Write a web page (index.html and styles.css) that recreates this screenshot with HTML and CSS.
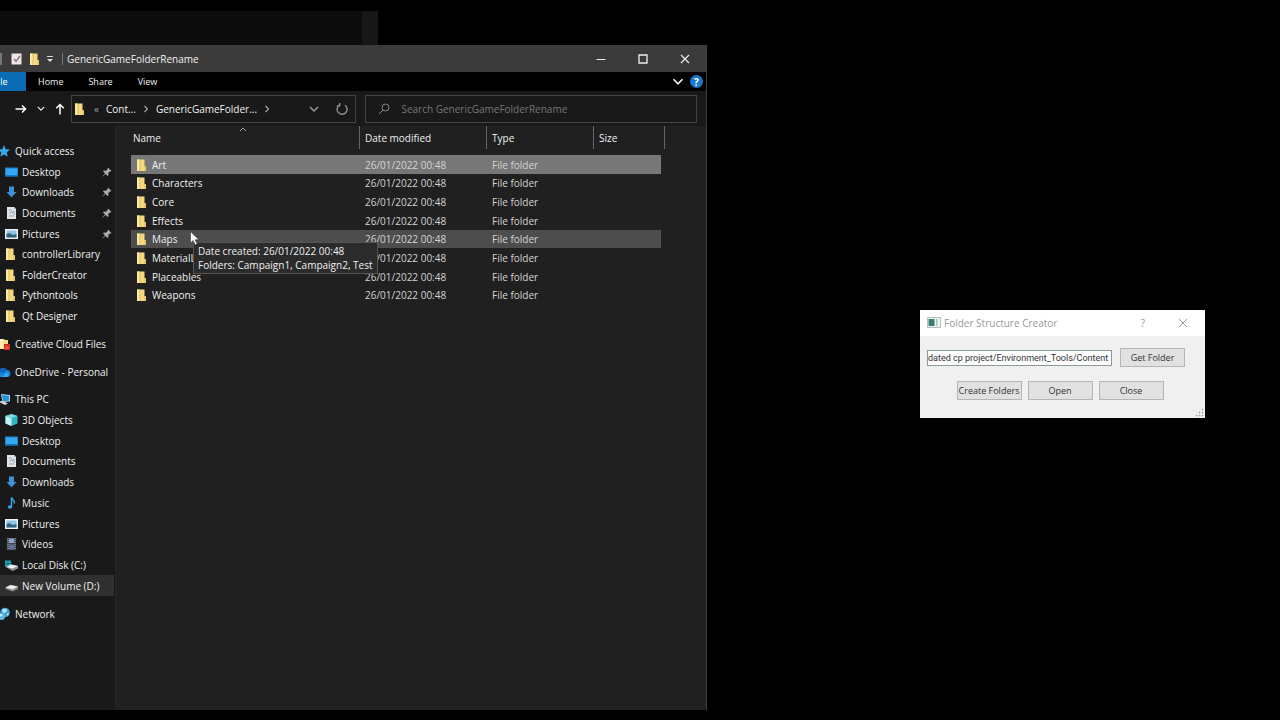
FILE: index.html
```html
<!DOCTYPE html>
<html lang="en">
<head>
<meta charset="utf-8">
<title>GenericGameFolderRename</title>
<link rel="stylesheet" href="styles.css">
</head>
<body>
<svg class="sprite" aria-hidden="true">
  <symbol id="folder" viewBox="0 0 14 14"><path d="M1 1.500h7.500V8l1.500.5V13H1z" fill="#f3d982"/><path d="M1 1.500h2.500V13H1z" fill="#fbe9a4"/><path d="M3.500 2h1v10.500h-1z" fill="#e0bf62"/><path d="M8 8.500h2V13H8z" fill="#e6c96e"/></symbol>
  <symbol id="desktop" viewBox="0 0 14 14"><path d="M0 2.500h13v9H0z" fill="#1583cf"/><path d="M1 3.500h11v6.500H1z" fill="#35a7ee"/><path d="M0 10.500h13v1H0z" fill="#0f6cb1"/></symbol>
  <symbol id="download" viewBox="0 0 14 14"><path d="M4 1.500h5V7h2.500l-5 5.500L1.500 7H4z" fill="#3c8fd9"/></symbol>
  <symbol id="document" viewBox="0 0 14 14"><path d="M2 1h7l2 2v10H2z" fill="#dfe4e8"/><path d="M9 1v2h2z" fill="#9ba8b3"/><path d="M4 4h2l1 3 2-2v4M4 7h2M4 10h5" fill="none" stroke="#7e95a8" stroke-width=".8"/></symbol>
  <symbol id="picture" viewBox="0 0 14 14"><path d="M0 2h13v10H0z" fill="#eef2f5"/><path d="M1.500 3.500h10v7h-10z" fill="#8ec5e6"/><path d="m1.500 7 3-1 3 2 4-1v3.500h-10z" fill="#35627c"/></symbol>
  <symbol id="pin" viewBox="0 0 10 10"><path d="m6 .5 3.500 3.500-1 .5-.7 0-1.500 1.600.2 2.100-.8.800L3.500 7 .7 9.600.4 9.300 3 6.500 1 4.300l.8-.8 2.100.2 1.600-1.500z" fill="#a8acb0"/></symbol>
  <symbol id="chev" viewBox="0 0 6 8"><path d="m1.500 1 3 3-3 3" fill="none" stroke="currentColor" stroke-width="1.100"/></symbol>
  <symbol id="down" viewBox="0 0 10 8"><path d="m1 2 4 4 4-4" fill="none" stroke="currentColor" stroke-width="1.500"/></symbol>
</svg>

<div class="back-window"></div>

<main class="explorer">
  <header class="titlebar">
    <span class="edge"></span>
    <svg class="tick" viewBox="0 0 12 14"><path d="M.5 1.500h10v11H.5z" fill="#eee6e6"/><path d="m3 7 2 2.500L9 4" fill="none" stroke="#8a6e74" stroke-width="1.300"/></svg>
    <svg class="icon"><use href="#folder"/></svg>
    <svg class="quick" viewBox="0 0 8 8"><path d="M1 1.500h6" stroke="#ddd"/><path d="M1 4h6L4 7z" fill="#ddd"/></svg>
    <span class="divider"></span>
    <h1>GenericGameFolderRename</h1>
    <div class="controls">
      <button aria-label="Minimise"><svg viewBox="0 0 10 10"><path d="M.5 5.500h9" stroke="#eee"/></svg></button>
      <button aria-label="Maximise"><svg viewBox="0 0 10 10"><path d="M1 1h8v8H1z" fill="none" stroke="#eee" stroke-width="1.300"/></svg></button>
      <button aria-label="Close window"><svg viewBox="0 0 10 10"><path d="m1 1 8 8M9 1 1 9" stroke="#eee" stroke-width="1.200"/></svg></button>
    </div>
  </header>

  <div class="ribbon">
    <button class="file">le</button>
    <button>Home</button>
    <button>Share</button>
    <button>View</button>
    <button class="expand" aria-label="Expand the ribbon"><svg viewBox="0 0 10 8"><use href="#down"/></svg></button>
    <button class="help" aria-label="Help">?</button>
  </div>

  <div class="toolbar">
    <div class="arrows">
      <button aria-label="Forward"><svg class="fwd" viewBox="0 0 12 10"><path d="M.5 5h10M7 1.500 10.500 5 7 8.500" fill="none" stroke="#fff" stroke-width="1.500"/></svg></button>
      <button aria-label="Recent locations"><svg class="recent"><use href="#down"/></svg></button>
      <button aria-label="Up"><svg class="up" viewBox="0 0 10 12"><path d="M5 11.500V1.500M1.200 5.300 5 1.500l3.800 3.800" fill="none" stroke="#fff" stroke-width="1.500"/></svg></button>
    </div>
    <div class="address">
      <svg class="icon"><use href="#folder"/></svg>
      <span class="more">«</span>
      <a href="#content">Cont...</a>
      <svg class="step"><use href="#chev"/></svg>
      <a href="#game">GenericGameFolder...</a>
      <svg class="step"><use href="#chev"/></svg>
      <button class="history" aria-label="Previous locations"><svg class="small"><use href="#down"/></svg></button>
      <button aria-label="Refresh"><svg class="refresh" viewBox="0 0 12 12"><path d="M3.500 2A5 5 0 1 0 9 2.200M3.700 0v2.800H.9" fill="none" stroke="#999" stroke-width="1.300"/></svg></button>
    </div>
    <label class="search">
      <svg viewBox="0 0 12 12"><circle cx="7.500" cy="4.500" r="3.500" fill="none" stroke="#888"/><path d="M5 7 1 11" stroke="#888"/></svg>
      <input type="search" aria-label="Search" placeholder="Search GenericGameFolderRename">
    </label>
  </div>

  <div class="panes">
    <nav class="tree">
      <ul class="quick-access">
        <li class="root"><a href="#"><svg class="icon" viewBox="0 0 14 14"><path d="m7 1 1.700 4.200 4.300.3-3.300 2.900 1 4.300L7 10.400l-3.700 2.300 1-4.300L1 5.500l4.300-.3z" fill="#38a9ea"/></svg>Quick access</a></li>
        <li><a href="#"><svg class="icon"><use href="#desktop"/></svg>Desktop<svg class="pin"><use href="#pin"/></svg></a></li>
        <li><a href="#"><svg class="icon"><use href="#download"/></svg>Downloads<svg class="pin"><use href="#pin"/></svg></a></li>
        <li><a href="#"><svg class="icon"><use href="#document"/></svg>Documents<svg class="pin"><use href="#pin"/></svg></a></li>
        <li><a href="#"><svg class="icon"><use href="#picture"/></svg>Pictures<svg class="pin"><use href="#pin"/></svg></a></li>
        <li><a href="#"><svg class="icon"><use href="#folder"/></svg>controllerLibrary</a></li>
        <li><a href="#"><svg class="icon"><use href="#folder"/></svg>FolderCreator</a></li>
        <li><a href="#"><svg class="icon"><use href="#folder"/></svg>Pythontools</a></li>
        <li><a href="#"><svg class="icon"><use href="#folder"/></svg>Qt Designer</a></li>
      </ul>
      <ul>
        <li class="root"><a href="#"><svg class="icon" viewBox="0 0 14 14"><path d="M2 2h5l1 1h3v9H2z" fill="#f6d98a"/><path d="M2 2h4v9H2z" fill="#ffedb8"/><path d="M7 7h6v6H7z" fill="#d22f1e"/><path d="M8.500 11c0-2 2-2 3 0z" fill="none" stroke="#ff8b70" stroke-width=".8"/></svg>Creative Cloud Files</a></li>
      </ul>
      <ul>
        <li class="root"><a href="#"><svg class="icon" viewBox="0 0 14 14"><path d="M3 12a3 3 0 0 1-1-5.800A4.300 4.300 0 0 1 9.800 5 3.600 3.600 0 0 1 11 12z" fill="#1684d8"/><path d="M5 12 9.500 7.500A3 3 0 0 1 11 12z" fill="#35a5ef"/><path d="M2 6.200A4.300 4.300 0 0 1 9.800 5L6 8.500z" fill="#0d63b5"/></svg>OneDrive - Personal</a></li>
      </ul>
      <ul class="this-pc">
        <li class="root"><a href="#"><svg class="icon" viewBox="0 0 14 14"><path d="m4 2 9 1v6.500L5.500 10z" fill="#a9dcf5"/><path d="m5 3 7 .8v5L6 9.200z" fill="#2894d6"/><path d="m1 9.500 5-.5 5 2.500-3 1.500z" fill="#cfd5da"/></svg>This PC</a></li>
        <li><a href="#"><svg class="icon" viewBox="0 0 14 14"><path d="m6.500 1 6 2v7.500l-6 2.500-6-2.500V3z" fill="#35b4bf"/><path d="m.5 3 6 2v8l-6-2.500z" fill="#c2f3f2"/><path d="m.5 3 6-2 6 2-6 2z" fill="#77dce0"/></svg>3D Objects</a></li>
        <li><a href="#"><svg class="icon"><use href="#desktop"/></svg>Desktop</a></li>
        <li><a href="#"><svg class="icon"><use href="#document"/></svg>Documents</a></li>
        <li><a href="#"><svg class="icon"><use href="#download"/></svg>Downloads</a></li>
        <li><a href="#"><svg class="icon" viewBox="0 0 14 14"><path d="M6.500 11V1.500C7 4 10 4 9.500 7.500" fill="none" stroke="#35a7e5" stroke-width="1.500"/><ellipse cx="5" cy="11" rx="2.200" ry="1.700" fill="#35a7e5"/></svg>Music</a></li>
        <li><a href="#"><svg class="icon"><use href="#picture"/></svg>Pictures</a></li>
        <li><a href="#"><svg class="icon" viewBox="0 0 14 14"><path d="M2 1h9v12H2z" fill="#42464c"/><path d="M4 1.500h5V6H4z" fill="#8aa5cf"/><path d="M4 7.500h5v5H4z" fill="#5c7299"/><path d="M3 1v12M10 1v12" stroke="#b4b8bd" stroke-dasharray="1 1"/></svg>Videos</a></li>
        <li><a href="#"><svg class="icon" viewBox="0 0 14 14"><path d="M0 2.500h6v6H0z" fill="#21a6b4"/><path d="M3 2.500v6M0 5.500h6" stroke="#0d5f77" stroke-width=".7"/><path d="m1 9 5-2.500 7 1.500v2.500L7.500 13z" fill="#8f9498"/><path d="m1 9 5-2.500L13 8l-5.500 2.500z" fill="#eceef0"/></svg>Local Disk (C:)</a></li>
        <li class="current"><a href="#"><svg class="icon" viewBox="0 0 14 14"><path d="m.5 8.500 5-2.500L13 7.500V10l-5.500 2.500-7-2.500z" fill="#85898c"/><path d="m.5 8.500 5-2.500L13 7.500l-5.500 3z" fill="#eceef0"/></svg>New Volume (D:)</a></li>
      </ul>
      <ul>
        <li class="root"><a href="#"><svg class="icon" viewBox="0 0 14 14"><circle cx="8" cy="5.500" r="4.800" fill="#3b9fd8"/><path d="M5 3c2-2 4-1 5 0S8 6 6 6zM9 7l3-1-1 3z" fill="#b8e4f7"/><circle cx="4.500" cy="9.500" r="3.500" fill="#5db7e5"/><path d="M2.500 8c1-1 3-1 3 0s-2 2-3 1z" fill="#d8f1fb"/></svg>Network</a></li>
      </ul>
    </nav>

    <section class="content">
      <table class="files">
        <colgroup><col class="c-name"><col class="c-date"><col class="c-type"><col class="c-size"></colgroup>
        <thead>
          <tr>
            <th><div>Name<svg class="sort" viewBox="0 0 8 5"><path d="m1 4 3-3 3 3" fill="none" stroke="#999"/></svg></div></th>
            <th><div>Date modified</div></th>
            <th><div>Type</div></th>
            <th><div>Size</div></th>
          </tr>
        </thead>
        <tbody>
          <tr class="selected"><td><svg class="icon"><use href="#folder"/></svg>Art</td><td>26/01/2022 00:48</td><td>File folder</td><td></td></tr>
          <tr><td><svg class="icon"><use href="#folder"/></svg>Characters</td><td>26/01/2022 00:48</td><td>File folder</td><td></td></tr>
          <tr><td><svg class="icon"><use href="#folder"/></svg>Core</td><td>26/01/2022 00:48</td><td>File folder</td><td></td></tr>
          <tr><td><svg class="icon"><use href="#folder"/></svg>Effects</td><td>26/01/2022 00:48</td><td>File folder</td><td></td></tr>
          <tr class="hover"><td><svg class="icon"><use href="#folder"/></svg>Maps</td><td>26/01/2022 00:48</td><td>File folder</td><td></td></tr>
          <tr><td><svg class="icon"><use href="#folder"/></svg>MaterialL</td><td>26/01/2022 00:48</td><td>File folder</td><td></td></tr>
          <tr><td><svg class="icon"><use href="#folder"/></svg>Placeables</td><td>26/01/2022 00:48</td><td>File folder</td><td></td></tr>
          <tr><td><svg class="icon"><use href="#folder"/></svg>Weapons</td><td>26/01/2022 00:48</td><td>File folder</td><td></td></tr>
        </tbody>
      </table>
    </section>
  </div>
</main>

<div class="tooltip" role="tooltip">Date created: 26/01/2022 00:48<br>Folders: Campaign1, Campaign2, Test</div>
<svg class="cursor" viewBox="0 0 10 15"><path d="M.5.5v11.500l2.700-2.500 2 4.500 2-1-2-4.200h3.800z" fill="#fff" stroke="#333" stroke-width=".6"/></svg>

<form class="dialog" onsubmit="return false">
  <header>
    <svg class="app" viewBox="0 0 14 12"><path d="M.5.5h13v10H.5z" fill="#eef4f2" stroke="#b5bfbc"/><path d="M1.500 2h6v7h-6z" fill="#3d7d70"/><path d="M9 2h1.500v7H9z" fill="#a9c5bd"/></svg>
    <h2>Folder Structure Creator</h2>
    <button class="ask" type="button" aria-label="What's this">?</button>
    <button class="shut" type="button" aria-label="Close dialog"><svg viewBox="0 0 10 10"><path d="m1 1 8 8M9 1 1 9" stroke="#999"/></svg></button>
  </header>
  <div class="path-row">
    <input type="text" aria-label="Folder path" value="dated cp project/Environment_Tools/Content">
    <button class="push" type="button">Get Folder</button>
  </div>
  <div class="actions">
    <button class="push" type="button">Create Folders</button>
    <button class="push" type="button">Open</button>
    <button class="push" type="button">Close</button>
  </div>
  <svg class="grip" viewBox="0 0 9 9"><path d="M7 1h1v1H7zM7 4h1v1H7zM4 4h1v1H4zM7 7h1v1H7zM4 7h1v1H4zM1 7h1v1H1z" fill="#999" stroke="#aaa" stroke-width=".6"/></svg>
</form>
</body>
</html>
```

FILE: styles.css
```css
* { box-sizing: border-box; }

body {
  margin: 0;
  height: 100vh;
  position: relative;
  overflow: hidden;
  background: #000;
  color: #f0f0f0;
  font: 10px/14px "Open Sans", "Noto Sans", sans-serif;
}

button, input { font: inherit; color: inherit; }
button { padding: 0; border: 0; background: none; display: flex; align-items: center; justify-content: center; }
a { color: inherit; text-decoration: none; }
ul { margin: 0; padding: 0; list-style: none; }
svg { flex: none; display: block; }
.sprite { position: absolute; width: 0; height: 0; }
.icon { width: 14px; height: 14px; }

/* Windows on the desktop */
.back-window {
  position: absolute;
  left: 0;
  top: 11px;
  width: 378px;
  height: 40px;
  background: #0c0c0c;
  border-right: 16px solid #171717;
}

.explorer {
  position: absolute;
  left: 0;
  top: 45px;
  right: 573px;
  bottom: 10px;
  display: flex;
  flex-direction: column;
  background: #202020;
  border-right: 1px solid #3c3c3c;
}

.titlebar { display: flex; align-items: center; height: 27px; background: #3b3b3b; }
.titlebar h1 { margin: 0 0 0 4px; font-size: 10px; font-weight: 400; }
.edge { width: 2px; height: 12px; background: #777; }
.tick { width: 12px; height: 14px; margin-left: 9px; }
.titlebar .icon { margin-left: 6px; }
.quick { width: 8px; height: 8px; margin-left: 3px; }
.titlebar .divider { width: 1px; height: 12px; margin-left: 8px; background: #777; }
.controls { display: flex; margin-left: auto; }
.controls button { width: 42px; height: 27px; }
.controls svg { width: 10px; height: 10px; }

.ribbon { display: flex; align-items: stretch; gap: 25px; height: 19px; background: #000; font-size: 9px; }
.ribbon .file { width: 26px; padding-right: 18px; margin-right: -13px; background: #0b6cb5; color: #fff; }
.expand { margin-left: auto; }
.expand svg { width: 12px; height: 9px; }
.ribbon .help { align-self: center; width: 13px; height: 13px; margin: 0 3px 0 -19px; border-radius: 50%; background: #1979ca; color: #fff; font-size: 10px; font-weight: 700; }

.toolbar { display: flex; align-items: center; gap: 9px; height: 35px; padding: 0 9px 0 15px; background: #191919; }
.arrows { display: flex; align-items: center; gap: 10px; width: 47px; }
.fwd { width: 12px; height: 10px; }
.recent { width: 8px; height: 7px; }
.up { width: 10px; height: 12px; }
.address, .search { display: flex; align-items: center; height: 28px; border: 1px solid #444; }
.address { flex: 286; min-width: 0; padding: 0 7px 0 2px; }
.more { margin: 0 7px 0 6px; color: #999; }
.step { width: 6px; height: 8px; margin: 0 7px; color: #aaa; }
.history { margin: 0 17px 0 auto; color: #999; }
.small { width: 10px; height: 8px; }
.refresh { width: 12px; height: 12px; }
.search { flex: 331; min-width: 0; gap: 11px; padding-left: 12px; }
.search svg { width: 12px; height: 12px; }
.search input { flex: 1; min-width: 0; padding: 0; border: 0; outline: 0; background: none; }
.search input::placeholder { color: #777; }

.panes { display: flex; flex: 1; min-height: 0; }

/* Navigation tree */
.tree { display: flex; flex-direction: column; gap: 7px; width: 117px; padding-top: 15px; background: #191919; border-right: 2px solid #232323; }
.tree ul { display: flex; flex-direction: column; min-height: 21px; }
.tree .quick-access { height: 185px; }
.tree .this-pc { height: 207px; }
.tree li { flex: 1; display: flex; margin-right: 1px; padding-left: 5px; white-space: nowrap; }
.tree .root { padding: 0; }
.tree a { flex: 1; display: flex; align-items: center; gap: 3px; }
.tree .root a { gap: 4px; }
.tree .root .icon { margin-left: -3px; }
.tree .current { background: #303030; }
.pin { width: 10px; height: 10px; margin: 0 2px 0 auto; }

/* File list */
.content { flex: 1; padding-left: 14px; }
.files { width: 534px; table-layout: fixed; border-collapse: separate; border-spacing: 0; }
.c-name { width: 229px; }
.c-date { width: 127px; }
.c-type { width: 107px; }
.files th { padding: 0 0 6px; font-weight: 400; text-align: left; }
.files th div { position: relative; height: 23px; padding-left: 5px; border-right: 1px solid #666; line-height: 24px; }
.files th:first-child div { padding-left: 2px; }
.sort { position: absolute; left: 108px; top: 1px; width: 8px; height: 5px; }
.files td { height: 19px; padding: 0 0 0 5px; line-height: 18px; color: #d4d4d4; }
.files tr:nth-child(3n+2) td { height: 18px; }
.files td:first-child { color: #f0f0f0; }
.files td .icon { display: inline-block; vertical-align: -3px; margin: 0 2px 0 0; }
.files td:last-child { border-right: 4px solid transparent; background-clip: padding-box; }
.files .selected td { background-color: #777; }
.files .hover td { background-color: #4d4d4d; }

.tooltip { position: absolute; left: 193px; top: 242px; padding: 1px 4px; border: 1px solid #555; background: #2b2b2b; white-space: nowrap; }
.cursor { position: absolute; left: 190px; top: 231px; width: 10px; height: 15px; }

/* Folder creator dialog */
.dialog { position: absolute; right: 75px; top: 310px; width: 285px; padding-bottom: 18px; background: #f0f0f0; color: #333; font-size: 9px; }
.dialog header { display: flex; align-items: center; height: 26px; padding: 0 17px 0 7px; background: #fff; color: #999; }
.dialog h2 { margin: 0 auto 0 3px; font-size: 10px; font-weight: 400; }
.app { width: 14px; height: 12px; }
.ask { width: 10px; margin-right: 30px; font-size: 10px; }
.shut svg { width: 10px; height: 10px; }
.path-row { display: flex; align-items: center; gap: 8px; padding: 12px 20px 0 7px; }
.path-row input { flex: 1; min-width: 0; height: 16px; padding: 0; border: 1px solid #8a9a9a; background: #fff; font-family: Roboto, "Open Sans", sans-serif; }
.push { width: 65px; height: 19px; border: 1px solid #b5b5b5; background: #e1e1e1; white-space: nowrap; }
.actions { display: flex; justify-content: center; gap: 6px; padding: 14px 5px 0 0; }
.grip { position: absolute; right: 1px; bottom: 1px; width: 9px; height: 9px; }
```
